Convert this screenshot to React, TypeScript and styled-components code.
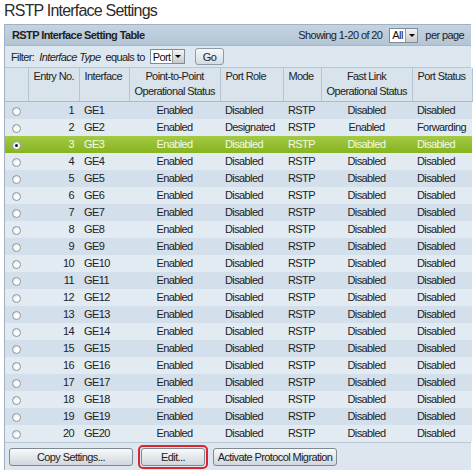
import React from 'react';
import styled, {createGlobalStyle} from 'styled-components';

const GlobalStyle = createGlobalStyle`
  html, body {
    margin: 0;
    padding: 0;
    background: #ffffff;
  }
  body {
    font-family: "Liberation Sans", Arial, sans-serif;
    font-size: 11px;
    letter-spacing: -0.6px;
    color: #333;
  }
`;

interface IPortRow {
  entry: number;
  iface: string;
  p2p: string;
  role: string;
  mode: string;
  fastLink: string;
  status: string;
}

const ROWS: IPortRow[] = Array.from({length: 20}, (_, i) => ({
  entry: i + 1,
  iface: `GE${i + 1}`,
  p2p: 'Enabled',
  role: i === 1 ? 'Designated' : 'Disabled',
  mode: 'RSTP',
  fastLink: i === 1 ? 'Enabled' : 'Disabled',
  status: i === 1 ? 'Forwarding' : 'Disabled'
}));

const SELECTED = 3;

const Page = styled.div`
  width: 474px;
  height: 470px;
  overflow: hidden;
  padding: 0 3px 0 4px;
  box-sizing: border-box;
`;

const Title = styled.h1`
  margin: 0;
  height: 24px;
  font-size: 16px;
  letter-spacing: -0.8px;
  font-weight: normal;
  line-height: 21px;
  color: #2b2b2b;
`;

const Panel = styled.div`
  border: 1px solid #9fb1c2;
  border-right: none;
  background: #dfe8f0;
`;

const PanelBar = styled.div`
  display: flex;
  align-items: center;
  height: 20px;
  padding: 0 7px 0 7px;
  background: linear-gradient(#c4d3e0, #b3c5d5);
  border-bottom: 1px solid #a6b7c7;
`;

const BarTitle = styled.div`
  font-weight: bold;
  color: #222;
  flex: 1;
`;

const BarRight = styled.div`
  display: flex;
  align-items: center;
  gap: 7px;
  color: #222;
`;

const Select = styled.div<{$w: number}>`
  display: flex;
  align-items: center;
  justify-content: space-between;
  width: ${p => p.$w}px;
  height: 15px;
  box-sizing: border-box;
  border: 1px solid #7f8b96;
  background: #fff;
  padding-left: 2px;
  color: #111;
`;

const SelectArrow = styled.span`
  display: flex;
  align-items: center;
  justify-content: center;
  width: 11px;
  height: 13px;
  background: linear-gradient(#f3f3f3, #c9c9c9);
  border-left: 1px solid #9a9a9a;

  &::after {
    content: '';
    border-left: 3px solid transparent;
    border-right: 3px solid transparent;
    border-top: 3px solid #000;
  }
`;

const FilterRow = styled.div`
  display: flex;
  align-items: center;
  height: 21px;
  padding-left: 6px;
  gap: 5px;
  background: #dde7ef;
  border-bottom: 1px solid #b8c7d4;
  color: #222;
`;

const Italic = styled.span`
  font-style: italic;
`;

const SmallButton = styled.button`
  height: 17px;
  padding: 0 7px;
  margin-left: 5px;
  font-family: inherit;
  font-size: 11px;
  letter-spacing: inherit;
  color: #222;
  border: 1px solid #8e9aa5;
  border-radius: 3px;
  background: linear-gradient(#f6f8fa, #d4dce3);
`;

const Table = styled.table`
  width: 467px;
  border-collapse: collapse;
  table-layout: fixed;
`;

const Th = styled.th<{$align?: string}>`
  height: 33px;
  box-sizing: border-box;
  padding: 1px 5px 0;
  vertical-align: top;
  text-align: ${p => p.$align || 'left'};
  font-weight: normal;
  line-height: 15px;
  white-space: nowrap;
  color: #222;
  background: #d8e3ec;
  border-left: 1px solid #f2f6f9;
  border-right: 1px solid #b5c4d1;
  border-bottom: 1px solid #a9bacb;

  &:first-child {
    border-left: none;
  }
`;

const Tr = styled.tr<{$odd: boolean; $selected: boolean}>`
  height: 17px;
  background: ${p =>
    p.$selected
      ? 'linear-gradient(#a3ca45, #86b41f)'
      : p.$odd
        ? '#d3dfea'
        : '#e3ebf2'};
  color: ${p => (p.$selected ? '#f4f9e8' : '#222')};
`;

const Td = styled.td<{$align?: string}>`
  padding: 0 5px;
  line-height: 17px;
  white-space: nowrap;
  text-align: ${p => p.$align || 'left'};
`;

const RadioCell = styled.td`
  padding: 0;
  line-height: 0;
`;

const Radio = styled.span<{$on: boolean}>`
  display: inline-block;
  width: 9px;
  height: 9px;
  margin-left: 7px;
  margin-top: 3px;
  box-sizing: border-box;
  border-radius: 50%;
  border: 1px solid #8d969e;
  background: radial-gradient(circle at 65% 65%, #ffffff 30%, #d4d9de 100%);
  position: relative;

  &::after {
    content: '';
    display: ${p => (p.$on ? 'block' : 'none')};
    position: absolute;
    left: 2px;
    top: 2px;
    width: 3px;
    height: 3px;
    border-radius: 50%;
    background: #111;
  }
`;

const ButtonBar = styled.div`
  display: flex;
  align-items: center;
  height: 28px;
  padding: 0 0 0 4px;
  gap: 8px;
  border-top: 1px solid #b8c7d4;
  background: #dde6ee;
`;

const ActionButton = styled.button<{$w: number}>`
  width: ${p => p.$w}px;
  height: 18px;
  font-family: inherit;
  font-size: 11px;
  letter-spacing: inherit;
  color: #222;
  border: 1px solid #7d8993;
  border-radius: 3px;
  background: linear-gradient(#f7f9fa, #cfd7de);
  padding: 0;
`;

const Highlight = styled.div`
  display: flex;
  padding: 1px;
  border: 2px solid #d9262e;
  border-radius: 5px;
  margin: 0 -3px;
`;

const App = () => {
  return (
    <Page>
      <GlobalStyle />
      <Title>RSTP Interface Settings</Title>
      <Panel>
        <PanelBar>
          <BarTitle>RSTP Interface Setting Table</BarTitle>
          <BarRight>
            <span>Showing 1-20 of 20</span>
            <Select $w={29}>
              All
              <SelectArrow />
            </Select>
            <span>per page</span>
          </BarRight>
        </PanelBar>
        <FilterRow>
          <span>Filter:</span>
          <Italic>Interface Type</Italic>
          <span>equals to</span>
          <Select $w={35}>
            Port
            <SelectArrow />
          </Select>
          <SmallButton>Go</SmallButton>
        </FilterRow>
        <Table>
          <colgroup>
            <col style={{width: 23}} />
            <col style={{width: 51}} />
            <col style={{width: 50}} />
            <col style={{width: 91}} />
            <col style={{width: 63}} />
            <col style={{width: 38}} />
            <col style={{width: 91}} />
            <col style={{width: 60}} />
          </colgroup>
          <thead>
            <tr>
              <Th />
              <Th $align="center">Entry No.</Th>
              <Th>Interface</Th>
              <Th $align="center">
                Point-to-Point
                <br />
                Operational Status
              </Th>
              <Th>Port Role</Th>
              <Th>Mode</Th>
              <Th $align="center">
                Fast Link
                <br />
                Operational Status
              </Th>
              <Th>Port Status</Th>
            </tr>
          </thead>
          <tbody>
            {ROWS.map(row => (
              <Tr
                key={row.entry}
                $odd={row.entry % 2 === 1}
                $selected={row.entry === SELECTED}
              >
                <RadioCell>
                  <Radio $on={row.entry === SELECTED} />
                </RadioCell>
                <Td $align="right">{row.entry}</Td>
                <Td>{row.iface}</Td>
                <Td $align="center">{row.p2p}</Td>
                <Td>{row.role}</Td>
                <Td>{row.mode}</Td>
                <Td $align="center">{row.fastLink}</Td>
                <Td>{row.status}</Td>
              </Tr>
            ))}
          </tbody>
        </Table>
        <ButtonBar>
          <ActionButton $w={124}>Copy Settings...</ActionButton>
          <Highlight>
            <ActionButton $w={64}>Edit...</ActionButton>
          </Highlight>
          <ActionButton $w={124}>Activate Protocol Migration</ActionButton>
        </ButtonBar>
      </Panel>
    </Page>
  );
};

export default App;
